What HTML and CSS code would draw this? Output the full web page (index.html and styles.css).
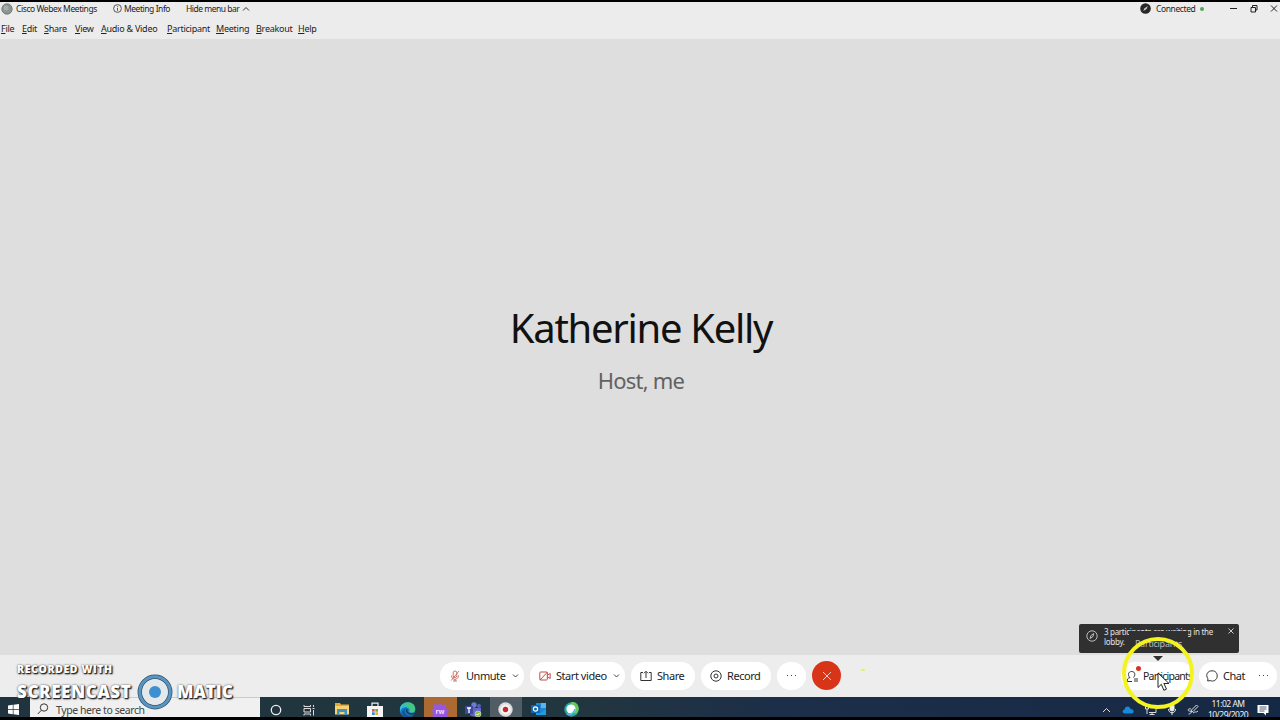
FILE: index.html
```html
<!DOCTYPE html>
<html lang="en">
<head>
  <meta charset="UTF-8" />
  <title>Cisco Webex Meetings</title>
  <link rel="stylesheet" href="styles.css">
</head>
<body>
  <div class="screen">
    <header class="title-bar">
      <svg class="app-logo" width="12" height="12" viewBox="0 0 12 12"><circle cx="6" cy="6" r="5.2" fill="#8b9691" stroke="#66716d" stroke-width=".8"/><circle cx="5" cy="5" r="2.5" fill="#a6afab"/></svg>
      <span class="app-name">Cisco Webex Meetings</span>
      <svg class="info-icon" width="9" height="9" viewBox="0 0 9 9" fill="none" stroke="#333" stroke-width=".8"><circle cx="4.5" cy="4.5" r="3.9"/><path d="M4.5 4v2.8M4.5 2.2v1"/></svg>
      <span class="info">Meeting Info</span>
      <span class="hide-menu">Hide menu bar</span>
      <svg width="8" height="8" viewBox="0 0 8 8" fill="none" stroke="#333"><path d="M1 5.5l3-3 3 3"/></svg>
      <div class="window-side">
        <svg width="11" height="11" viewBox="0 0 11 11"><circle cx="5.5" cy="5.5" r="5.3" fill="#272727"/><path d="M3.4 8l.8-2.600L7.800 3 6.600 6z" fill="#ccc"/></svg>
        <span class="connected">Connected</span>
        <i class="online"></i>
        <svg class="window-buttons" width="52" height="12" viewBox="0 0 52 12" fill="none" stroke="#222"><path d="M4 5.500h7M25 4.500h4.500v4.500H25zM26.500 4.500V2.500H31v4.500h-1.500M45 2.500l6 6M51 2.500l-6 6"/></svg>
      </div>
    </header>
    <nav class="menu">
      <span><u>F</u>ile</span><span><u>E</u>dit</span><span><u>S</u>hare</span><span><u>V</u>iew</span><span class="wide"><u>A</u>udio &amp; Video</span><span><u>P</u>articipant</span><span><u>M</u>eeting</span><span><u>B</u>reakout</span><span><u>H</u>elp</span>
    </nav>

    <main class="stage">
      <div class="name">Katherine Kelly</div>
      <div class="role">Host, me</div>
    </main>

    <section class="controls">
      <div class="pill unmute">
        <svg width="12" height="12" viewBox="0 0 12 12" fill="none" stroke="#c5655a" stroke-width=".9"><rect x="4.200" y="1" width="3.600" height="6.500" rx="1.800"/><path d="M2.500 5.500c0 5 7 5 7 0M6 9.300V11M4 11h4M10 1L2.200 10.500"/></svg>
        <span>Unmute</span>
        <svg class="caret" width="7" height="6" viewBox="0 0 7 6" fill="none" stroke="#444"><path d="M1 1.500L3.500 4 6 1.500"/></svg>
      </div>
      <div class="pill video">
        <svg width="12" height="12" viewBox="0 0 12 12" fill="none" stroke="#c14b40"><rect x=".8" y="2" width="7.500" height="8" rx=".8"/><path d="M8.500 5l2.700-1.500v5L8.500 7M1 10L8.500 2"/></svg>
        <span>Start video</span>
        <svg class="caret" width="7" height="6" viewBox="0 0 7 6" fill="none" stroke="#444"><path d="M1 1.500L3.500 4 6 1.500"/></svg>
      </div>
      <div class="pill share">
        <svg width="12" height="12" viewBox="0 0 12 12" fill="none" stroke="#333"><path d="M3 2.500H.8v8h10.400v-8H9M6 8V1.500M4 3.300l2-2 2 2"/></svg>
        <span>Share</span>
      </div>
      <div class="pill record">
        <svg width="12" height="12" viewBox="0 0 12 12" fill="none" stroke="#333"><circle cx="6" cy="6" r="5.200"/><circle cx="6" cy="6" r="2"/></svg>
        <span>Record</span>
      </div>
      <div class="pill more"><i></i><i></i><i></i></div>
      <div class="leave"><svg width="10" height="10" viewBox="0 0 10 10" stroke="#f8cfc6"><path d="M1 1l8 8M9 1L1 9"/></svg></div>
      <div class="spark"></div>
      <div class="pill people">
        <svg width="13" height="14" viewBox="0 0 13 14" fill="none" stroke="#333"><path d="M4 8.500C1.500 6.500 2 2.500 5.700 2.500S9.500 6.500 7.500 8.500M4 8.500C2 9 1.200 10 1.200 12.500H6M8 10h4M8 12h4"/></svg>
        <span>Participants</span>
        <b class="alert"></b>
      </div>
      <div class="pill chat">
        <svg width="12" height="12" viewBox="0 0 12 12" fill="none" stroke="#333"><path d="M1.700 11l.2-2.300C-1 4.500 2 .8 6 .8s5.200 2.700 5.200 5.200c0 4-4 6-7 4.600z"/></svg>
        <span>Chat</span>
        <div class="dots"><i></i><i></i><i></i></div>
      </div>
    </section>

    <footer class="taskbar">
      <div class="start"><svg width="11" height="11" viewBox="0 0 11 11" fill="#fff"><path d="M0 1.500l4.800-.7v4.400H0zM5.500.7L11 0v5.200H5.500zM0 5.900h4.800v4.400L0 9.600zM5.500 5.900H11V11l-5.500-.7z"/></svg></div>
      <div class="search">
        <svg width="12" height="12" viewBox="0 0 12 12" fill="none" stroke="#333"><circle cx="7" cy="4.500" r="3.700"/><path d="M4.300 7.300L.8 11"/></svg>
        <span>Type here to search</span>
      </div>
      <div class="app"><svg width="12" height="12" viewBox="0 0 12 12" fill="none" stroke="#eee" stroke-width="1.300"><circle cx="6" cy="6" r="4.700"/></svg></div>
      <div class="app"><svg width="12" height="12" viewBox="0 0 12 12" fill="none" stroke="#ddd"><path d="M1 1v1.500h6.500V1M1 4.500h6.500v3.500H1zM1 11.500V10h6.500v1.500M10.500 1v2M10.500 6v5.500M9.500 4.500h2"/></svg></div>
      <div class="app"><svg width="16" height="14" viewBox="0 0 16 14"><path d="M1 1h5l1 1.500h8V12H1z" fill="#e7a83a"/><path d="M1 4h14v8.500H1z" fill="#f8d36d"/><path d="M3 7h10v6h-2.500v-3h-5v3H3z" fill="#3f91ca"/></svg></div>
      <div class="app"><svg width="16" height="15" viewBox="0 0 16 15"><path d="M5 5V1.200h6V5" fill="none" stroke="#eee" stroke-width="1.200"/><path d="M0 4h16v11H0z" fill="#f5f5f5"/><path d="M5 7h2.700v2.700H5z" fill="#e5533c"/><path d="M8.300 7H11v2.700H8.300z" fill="#74a92b"/><path d="M5 10.300h2.700V13H5z" fill="#2f8bd0"/><path d="M8.300 10.300H11V13H8.300z" fill="#e9ae22"/></svg></div>
      <div class="app"><svg width="17" height="16" viewBox="0 0 17 16"><circle cx="8.500" cy="8" r="7.800" fill="#1678c8"/><path d="M1 6C3-1.500 16-2 16.300 7c0 4-5 4.500-6 2.500 1-3-2-5-5-4.300C3 5.600 1.600 6.500 1 8z" fill="#42c781"/><path d="M1 6C3 1 8 2 9.500 6 5 3.500 2 6.500 1 10z" fill="#37b9df"/><path d="M6 7c-2 5 3 8 8 6-3 4-11 3-11-2 0-2 1.500-3.500 3-4z" fill="#115591"/><path d="M8 7c-1.500 3.500 2 6 7.500 4.500" fill="none" stroke="#253d49" stroke-width="1.500"/></svg></div>
      <div class="app orange"><svg width="18" height="16" viewBox="0 0 18 16"><path d="M9 0l2 3 4-1v4l3 2-2 3 1 5H1l1-5-2-3 3-2V2l4 1z" fill="#9658dd"/><text x="9" y="11.500" text-anchor="middle" class="rw">rw</text></svg></div>
      <div class="app"><svg width="17" height="15" viewBox="0 0 17 15"><circle cx="9" cy="3" r="2.700" fill="#7178d4"/><circle cx="14" cy="4" r="2" fill="#5660b8"/><path d="M5 6h11v6q-5 5-11 1z" fill="#6169c5"/><path d="M0 4h8v8H0z" fill="#3f46a0"/><path d="M2 6h4M4 6v5" stroke="#fff" stroke-width="1.300"/><circle cx="13" cy="12" r="3" fill="#8bbb43" stroke="#eee" stroke-width=".5"/><path d="M11.500 12l1 1 2-2" fill="none" stroke="#fff"/></svg></div>
      <div class="app active"><svg width="15" height="15" viewBox="0 0 15 15"><circle cx="7.500" cy="7.500" r="7.200" fill="#ddd"/><circle cx="7.500" cy="7.500" r="5" fill="#f6f3f1"/><circle cx="7.500" cy="7.500" r="2.700" fill="#c3282d"/></svg></div>
      <div class="app"><svg width="16" height="14" viewBox="0 0 16 14"><path d="M5 1h10v12H5z" fill="#2484cc"/><path d="M10 1h5v5h-5z" fill="#55b7ec"/><path d="M5 8l5 3 5-4v6H5z" fill="#1d9ee4"/><path d="M0 3h9v8H0z" fill="#0c67b5"/><circle cx="4.500" cy="7" r="2.100" fill="none" stroke="#fff" stroke-width="1.200"/></svg></div>
      <div class="app"><svg width="15" height="15" viewBox="0 0 15 15"><circle cx="7.500" cy="7.500" r="7.200" fill="#26a6a0"/><path d="M7 0c8-1 10 8 5 12-3-2-5-2-6-1z" fill="#69c65c"/><circle cx="7" cy="7" r="4.600" fill="#f8ffff"/><path d="M3 12q6 2 8-5" fill="none" stroke="#57b8e3" stroke-width="1.500"/></svg></div>

      <div class="tray">
        <svg width="9" height="8" viewBox="0 0 9 8" fill="none" stroke="#ddd"><path d="M1 6l3.500-3.500L8 6"/></svg>
        <svg width="12" height="8" viewBox="0 0 12 8"><path d="M3 7.500C0 7.500 0 4 2.500 3.500 3-.5 8-.5 8.500 3c4 0 4 4.500 1 4.500z" fill="#168bdc"/></svg>
        <svg width="12" height="10" viewBox="0 0 12 10" fill="none" stroke="#ddd"><path d="M3 2.500h8v5H4M7 7.500v2M4.500 9.500h5M.5 1h3v3h-3zM2 4v5"/></svg>
        <svg width="8" height="11" viewBox="1 0 8 11" fill="none" stroke="#eee"><rect x="3" y="0" width="4" height="7" rx="2" fill="#eee"/><path d="M1.500 5c0 5 7 5 7 0M5 8.500V11"/></svg>
        <svg width="12" height="11" viewBox="0 0 12 11" fill="none" stroke="#ddd"><path d="M4.500 6l5-5 1.500 1.500-5 5-2 .5zM4 5C1 4 0 7 2.500 7s2 3-1 3M6 9c2-2 3 0 5-2"/></svg>
      </div>
      <div class="clock"><span>11:02 AM</span><span>10/29/2020</span></div>
      <svg class="notice" width="12" height="12" viewBox="0 0 12 12"><path d="M.5 1h11v8H9v2.500L6.500 9h-6z" fill="#fff"/><path d="M2.500 3h7M2.500 5h7M2.500 7h5" stroke="#263950" stroke-width=".8"/></svg>
    </footer>

    <div class="toast">
      <svg width="12" height="12" viewBox="0 0 12 12" fill="none" stroke="#ccc" stroke-width=".9"><circle cx="6" cy="6" r="5.200"/><path d="M4 8.500l.8-2.800L7.700 3.500 7 6.500z"/></svg>
      <p>3 participants are waiting in the lobby.</p>
      <svg class="close" width="6" height="6" viewBox="0 0 6 6" stroke="#ddd" stroke-width=".9"><path d="M.5.5l5 5M5.500.5l-5 5"/></svg>
    </div>
    <div class="tooltip">Participants</div>

    <div class="watermark">
      <div class="small">RECORDED WITH</div>
      <div class="brand"><span class="cast">SCREENCAST</span><svg width="36" height="36" viewBox="0 0 36 36"><circle cx="18" cy="18" r="15.200" fill="none" stroke="#34536a" stroke-width="4.500"/><circle cx="18" cy="18" r="15.200" fill="none" stroke="#5795c2" stroke-width="3"/><circle cx="18" cy="18" r="12.500" fill="#e3e8eb"/><circle cx="18" cy="18" r="6" fill="#3f8fd0"/></svg><span class="matic">MATIC</span></div>
    </div>

    <div class="click-ring"></div>
    <svg class="cursor" width="13" height="20" viewBox="0 0 13 20"><path d="M1 1v14.500l3.300-3.200 2.600 6 2.600-1.200-2.600-5.600H12z" fill="#fff" stroke="#222"/></svg>
  </div>
</body>
</html>
```
FILE: styles.css
```css
* {
  box-sizing: border-box;
}
body {
  margin: 0;
  background: #000;
  font-family: "Noto Sans", "Open Sans", sans-serif;
  color: #222;
}
svg {
  display: block;
  flex: none;
}
.screen {
  position: relative;
  width: 1280px;
  height: 720px;
  padding: 2px 0 3px;
  overflow: hidden;
  display: flex;
  flex-direction: column;
  white-space: nowrap;
}
.title-bar {
  height: 16px;
  background: #ececec;
  display: flex;
  align-items: center;
  padding: 0 0 3px 1px;
  font-size: 8.5px;
  letter-spacing: -0.42px;
}
.app-name {
  width: 97px;
  margin-left: 3px;
}
.info-icon {
  margin-right: 2px;
}
.info {
  width: 62px;
  letter-spacing: -0.45px;
}
.hide-menu {
  width: 56px;
  letter-spacing: -0.5px;
}
.window-side {
  margin-left: auto;
  display: flex;
  align-items: center;
}
.connected {
  width: 44px;
  margin-left: 5px;
  letter-spacing: -0.4px;
}
.online {
  width: 4px;
  height: 4px;
  border-radius: 50%;
  background: #58a35b;
}
.window-buttons {
  margin-left: 22px;
  margin-right: 2px;
}
.menu {
  height: 21px;
  padding-left: 1px;
  background: #ececec;
  display: grid;
  grid-template-columns: 21px 22px 31px 26px 66px 49px 40px 42px 30px;
  align-items: center;
  font-size: 9px;
  letter-spacing: -0.25px;
}
.menu u {
  text-underline-offset: 1px;
}
.stage {
  height: 616px;
  background: #dedede;
  display: flex;
  flex-direction: column;
  align-items: center;
  padding: 261px 0 0 2px;
}
.name {
  font-size: 40px;
  line-height: 56px;
  letter-spacing: -1.3px;
  color: #111;
}
.role {
  margin-top: 8px;
  font-size: 22px;
  line-height: 32px;
  letter-spacing: -0.8px;
  color: #626262;
}
.controls {
  height: 42px;
  background: #ededed;
  display: flex;
  align-items: center;
  padding: 0 3px 1px 440px;
  gap: 6px;
  font-size: 11px;
  letter-spacing: -0.45px;
}
.pill {
  height: 28px;
  border-radius: 14px;
  background: #fff;
  display: flex;
  align-items: center;
  padding-left: 9px;
  gap: 5px;
}
.caret {
  margin-left: auto;
  margin-right: 5px;
}
.unmute {
  width: 84px;
}
.video {
  width: 95px;
}
.share {
  width: 64px;
}
.record {
  width: 70px;
}
.more {
  width: 29px;
  padding: 0;
  justify-content: center;
  gap: 3px;
}
.more i,
.dots i {
  width: 1px;
  height: 1px;
  background: #444;
}
.leave {
  width: 29px;
  height: 29px;
  border-radius: 50%;
  background: #d83518;
  display: flex;
  align-items: center;
  justify-content: center;
}
.spark {
  width: 4px;
  height: 2px;
  margin: -11px 0 0 14px;
  background: #f1f03a;
  border-radius: 50%;
}
.people {
  position: relative;
  width: 73px;
  margin-left: auto;
  padding-left: 5px;
  gap: 4px;
  font-size: 10.5px;
  letter-spacing: -0.77px;
}
.alert {
  position: absolute;
  left: 15px;
  top: 4px;
  width: 5px;
  height: 5px;
  border-radius: 50%;
  background: #d9341c;
}
.chat {
  width: 78px;
  margin-left: -1px;
  padding-left: 7px;
}
.dots {
  display: flex;
  gap: 3px;
  margin-left: auto;
  margin-right: 9px;
}
.taskbar {
  height: 20px;
  overflow: hidden;
  background: linear-gradient(90deg, #20343f 0%, #22363f 45%, #1d2e48 60%, #162944 100%);
  display: flex;
  align-items: flex-start;
}
.start {
  width: 30px;
  padding: 7px 0 0 8px;
}
.search {
  width: 230px;
  height: 20px;
  background: #f0f0f0;
  border-top: 1px solid #ccc;
  display: flex;
  padding: 5px 0 0 7px;
  gap: 7px;
  font-size: 10.5px;
  line-height: 14px;
  letter-spacing: -0.42px;
  color: #444;
}
.app {
  width: 32.8px;
  height: 20px;
  padding-top: 5px;
  display: flex;
  justify-content: center;
}
.app:nth-child(3),
.app:nth-child(4) {
  padding-top: 7px;
}
.orange {
  background: #ac6932;
}
.active {
  background: #505d65;
}
.rw {
  fill: #f2dcff;
  font-size: 7px;
  font-weight: bold;
}
.tray {
  margin-left: auto;
  padding-top: 7px;
  display: flex;
  align-items: center;
  gap: 11px;
}
.clock {
  width: 38px;
  margin-left: 10px;
  padding-top: 1px;
  display: flex;
  flex-direction: column;
  align-items: center;
  color: #f1f1f1;
  font-size: 8.5px;
  line-height: 11px;
  letter-spacing: -0.5px;
}
.notice {
  margin: 7px 11px 0 10px;
}
.toast {
  position: absolute;
  left: 1079px;
  top: 624px;
  width: 160px;
  height: 29px;
  border-radius: 2px;
  background: #303030;
  color: #e4e4e4;
  display: flex;
  padding: 3px 5px 0 7px;
  font-size: 8px;
  line-height: 10px;
  letter-spacing: -0.3px;
}
.toast > svg:first-child {
  margin-top: 3px;
}
.toast p {
  width: 118px;
  margin: 0 0 0 6px;
  white-space: normal;
}
.toast .close {
  margin: 1px 0 0 auto;
}
.tooltip {
  position: absolute;
  left: 1129px;
  top: 631px;
  width: 59px;
  height: 22px;
  padding-top: 6px;
  background: #303030;
  color: #bbb;
  text-align: center;
  font-size: 9px;
  line-height: 13px;
  letter-spacing: -0.25px;
}
.tooltip::after {
  content: "";
  position: absolute;
  left: 24px;
  top: 25px;
  border: 5px solid transparent;
  border-top-color: #303030;
  border-bottom: 0;
}
.watermark {
  position: absolute;
  left: 17px;
  top: 662px;
  color: #fff;
  font-family: "Open Sans", "Noto Sans", sans-serif;
  font-weight: 800;
  text-shadow: 1px 1px 1px #222, 0 0 2px #555, 1px 1px 2px #333;
}
.small {
  font-size: 10.5px;
  line-height: 14px;
  letter-spacing: 0.6px;
}
.brand {
  display: flex;
  align-items: center;
  margin-top: -2px;
  font-size: 17px;
  line-height: 20px;
}
.cast {
  width: 120px;
  letter-spacing: 0.6px;
}
.brand .matic {
  margin-left: 4px;
}
.click-ring {
  position: absolute;
  left: 1122px;
  top: 637px;
  width: 72px;
  height: 72px;
  border: 4px solid #f3f31d;
  border-radius: 50%;
}
.cursor {
  position: absolute;
  left: 1157px;
  top: 672px;
}
```
